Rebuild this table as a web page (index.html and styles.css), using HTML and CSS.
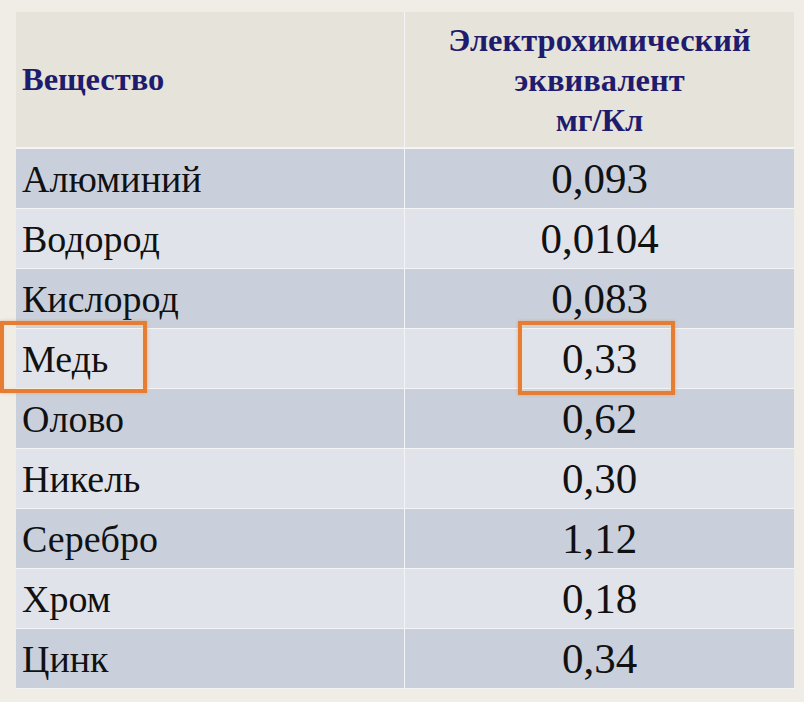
FILE: index.html
```html
<!DOCTYPE html>
<html lang="ru">
<head>
<meta charset="utf-8">
<link rel="stylesheet" href="styles.css">
</head>
<body>
<div class="frame">
  <div class="table">
    <div class="head name-head">Вещество</div>
    <div class="head value-head">Электрохимический<br>эквивалент<br>мг/Кл</div>
    <div class="cell name dark">Алюминий</div><div class="cell value dark">0,093</div>
    <div class="cell name light">Водород</div><div class="cell value light">0,0104</div>
    <div class="cell name dark">Кислород</div><div class="cell value dark">0,083</div>
    <div class="cell name light"><span class="mark mark-name"></span>Медь</div><div class="cell value light"><span class="mark mark-value"></span>0,33</div>
    <div class="cell name dark">Олово</div><div class="cell value dark">0,62</div>
    <div class="cell name light">Никель</div><div class="cell value light">0,30</div>
    <div class="cell name dark">Серебро</div><div class="cell value dark">1,12</div>
    <div class="cell name light">Хром</div><div class="cell value light">0,18</div>
    <div class="cell name dark">Цинк</div><div class="cell value dark">0,34</div>
  </div>
</div>
</body>
</html>
```
FILE: styles.css
```css
html, body {
  margin: 0;
  padding: 0;
}
body {
  background: #efede6;
  width: 804px;
  height: 702px;
  overflow: hidden;
  font-family: "Liberation Serif", "Times New Roman", serif;
}
.frame {
  padding: 12px 10px 13px 16px;
}
.table {
  display: grid;
  grid-template-columns: 388px 389px;
  column-gap: 1px;
  row-gap: 0;
  background: #f4f4f6;
  width: 778px;
}
.head {
  background: #e6e3db;
  color: #1f1c6e;
  font-weight: bold;
  height: 135px;
  margin-bottom: 2px;
  display: flex;
  align-items: center;
}
.name-head {
  font-size: 32.5px;
  padding-left: 6px;
}
.value-head {
  font-size: 32.5px;
  line-height: 40px;
  justify-content: center;
  text-align: center;
}
.cell {
  height: 59px;
  margin-bottom: 1px;
  display: flex;
  align-items: center;
  color: #111;
  position: relative;
}
.dark { background: #c9d0dc; }
.light { background: #e0e3ea; }
.name {
  font-size: 38px;
  padding-left: 6px;
}
.value {
  font-size: 43px;
  justify-content: center;
}
.mark {
  position: absolute;
  z-index: 5;
  border: 4px solid #e57d35;
  box-shadow: 0 0 3px rgba(229,125,53,0.5), inset 0 0 3px rgba(255,220,180,0.8);
}
.mark-name {
  left: -16px;
  top: -8px;
  width: 139px;
  height: 64px;
}
.mark-value {
  left: 113px;
  top: -8px;
  width: 149px;
  height: 66px;
}
```
